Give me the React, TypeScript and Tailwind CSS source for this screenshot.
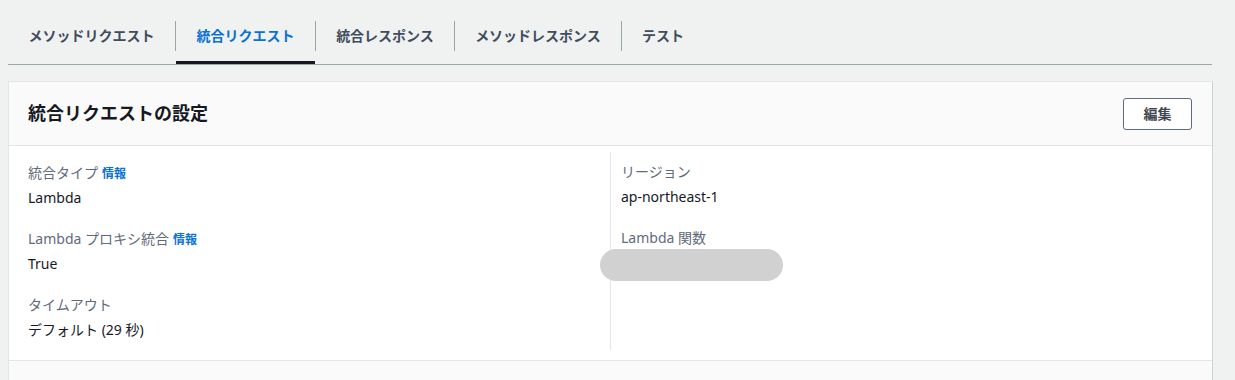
const FONT = "font-['Noto_Sans','Noto_Sans_CJK_JP',sans-serif]"

const TABS = [
  { label: "メソッドリクエスト", w: "w-[167px]" },
  { label: "統合リクエスト", w: "w-[139px]" },
  { label: "統合レスポンス", w: "w-[138px]" },
  { label: "メソッドレスポンス", w: "w-[166px]" },
  { label: "テスト", w: "w-[82px]" },
]

function Tabs() {
  return (
    <div className="mx-[8px] flex h-[65px] w-[1204px] items-end border-b border-[#9ba7a6]">
      {TABS.map((t, i) => {
        const active = i === 1
        return (
          <div key={t.label} className="flex h-full items-center">
            {i > 0 && <div className="mt-[8px] h-[30px] w-px bg-[#9ba7a6]" />}
            <div
              className={
                "relative flex h-full items-center justify-center pt-[7px] text-[14px] font-bold " +
                t.w +
                (active ? " text-[#0972d3]" : " text-[#414d5c]")
              }
            >
              {t.label}
              {active && <div className="absolute bottom-0 left-0 right-0 h-[3px] bg-[#16191f]" />}
            </div>
          </div>
        )
      })}
    </div>
  )
}

function Info() {
  return <span className="ml-[4px] text-[12px] font-bold text-[#0972d3]">情報</span>
}

function Field({ label, children }: { label: React.ReactNode; children: React.ReactNode }) {
  return (
    <div className="flex flex-col">
      <div className="h-[20px] text-[14px] leading-[20px] text-[#5f6b7a]">{label}</div>
      <div className="mt-[4px] h-[22px] text-[14px] leading-[22px] text-[#16191f]">{children}</div>
    </div>
  )
}

export default function App() {
  return (
    <div className={`h-[380px] w-[1235px] overflow-hidden bg-[#f0f1f1] ${FONT}`}>
      <Tabs />
      <div className="ml-[8px] mt-[16px] w-[1205px] border border-[#e3e5e6] border-r-[#cfd2d3] bg-white">
        <div className="flex h-[64px] items-center justify-between border-b border-[#e3e5e6] bg-[#fafafa] pl-[19px] pr-[20px]">
          <h2 className="text-[18px] font-bold text-[#16191f]">統合リクエストの設定</h2>
          <button className="h-[32px] w-[69px] rounded-[3px] border border-[#5f6b7a] bg-white text-[14px] font-bold text-[#424650]">
            編集
          </button>
        </div>
        <div className="flex h-[214px] pt-[6px]">
          <div className="flex w-[601px] flex-col gap-[20px] pl-[19px] pt-[11px]">
            <Field label={<>統合タイプ<Info /></>}>Lambda</Field>
            <Field label={<>Lambda プロキシ統合<Info /></>}>True</Field>
            <Field label="タイムアウト">デフォルト (29 秒)</Field>
          </div>
          <div className="mb-[10px] w-px bg-[#e3e5e6]" />
          <div className="flex flex-1 flex-col gap-[20px] pl-[10px] pt-[10px]">
            <Field label="リージョン">ap-northeast-1</Field>
            <div className="flex flex-col">
              <div className="h-[20px] text-[14px] leading-[20px] text-[#5f6b7a]">Lambda 関数</div>
              <div className="-ml-[21px] mt-[1px] h-[32px] w-[183px] rounded-full bg-[#d1d1d1]" />
            </div>
          </div>
        </div>
        <div className="h-[30px] border-t border-[#e3e5e6] bg-[#fafafa]" />
      </div>
    </div>
  )
}
